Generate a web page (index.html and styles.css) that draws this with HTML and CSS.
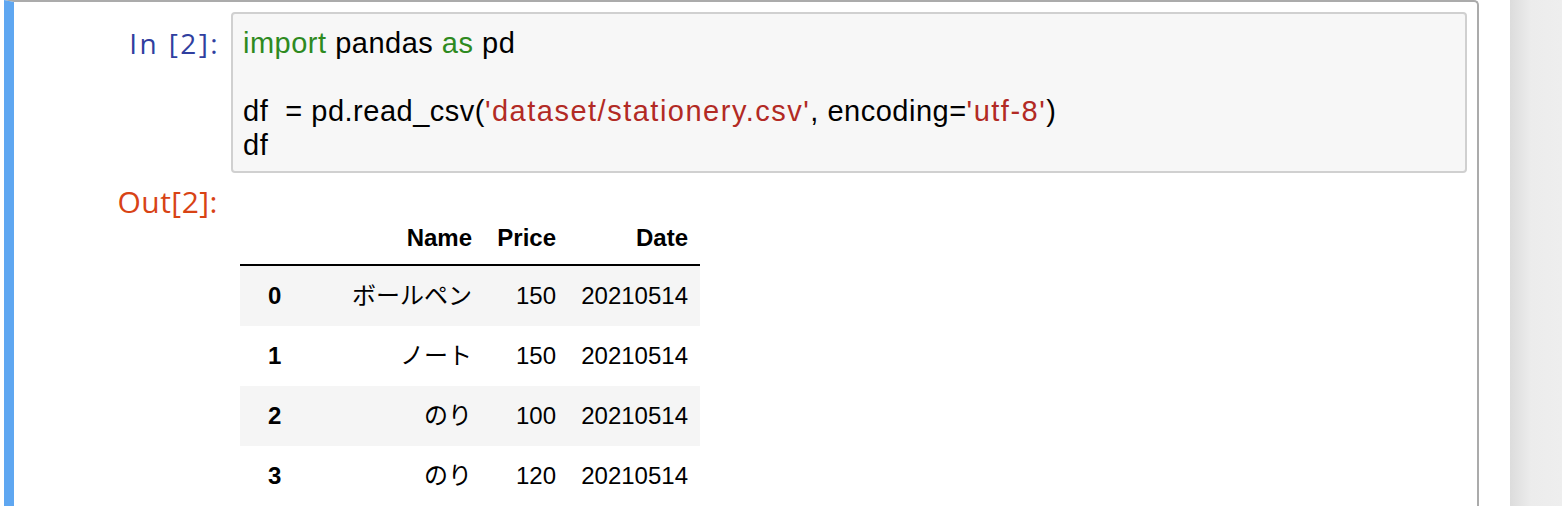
FILE: index.html
```html
<!DOCTYPE html>
<html lang="ja">
<head>
<meta charset="utf-8">
<title>Notebook</title>
<link rel="stylesheet" href="styles.css">
</head>
<body>
<div class="page">
  <div class="main">
    <div class="cell">
      <div class="row">
        <div class="prompt in-prompt">In&nbsp;[2]:</div>
        <div class="code"><div class="line"><span class="kw">import</span> pandas <span class="kw">as</span> pd</div><div class="line">&nbsp;</div><div class="line">df&nbsp; = pd.read_csv(<span class="str">'dataset/stationery.csv'</span>, encoding=<span class="str">'utf-8'</span>)</div><div class="line">df</div></div>
      </div>
      <div class="row out-row">
        <div class="prompt out-prompt">Out[2]:</div>
        <div class="output">
          <table class="df">
            <thead>
              <tr><th class="c-idx"></th><th class="c-name">Name</th><th class="c-price">Price</th><th class="c-date">Date</th></tr>
            </thead>
            <tbody>
              <tr class="odd"><th class="c-idx">0</th><td>ボールペン</td><td>150</td><td>20210514</td></tr>
              <tr><th class="c-idx">1</th><td>ノート</td><td>150</td><td>20210514</td></tr>
              <tr class="odd"><th class="c-idx">2</th><td>のり</td><td>100</td><td>20210514</td></tr>
              <tr><th class="c-idx">3</th><td>のり</td><td>120</td><td>20210514</td></tr>
            </tbody>
          </table>
        </div>
      </div>
    </div>
  </div>
  <div class="side"></div>
</div>
</body>
</html>
```
FILE: styles.css
```css
html, body { margin: 0; padding: 0; background: #fff; }
body { width: 1562px; height: 506px; overflow: hidden; font-family: "Liberation Sans", "Noto Sans CJK JP", sans-serif; }
.page { display: flex; height: 506px; }
.main { width: 1510px; flex: none; padding-left: 4px; box-sizing: border-box; }
.side { flex: 1; background: linear-gradient(to right, #dcdcdc, #ececec 40%, #eeeeee); }
.cell {
  width: 1475px;
  box-sizing: border-box;
  border-top: 2px solid #ababab;
  border-right: 2px solid #ababab;
  border-left: 10px solid #5fa7f1;
  border-top-right-radius: 5px;
  padding: 10px 10px 0 0;
  height: 520px;
}
.row { display: flex; align-items: flex-start; }
.prompt {
  width: 217px; flex: none; box-sizing: border-box;
  padding-right: 13px; text-align: right;
  font-family: "Open Sans", "Liberation Sans", sans-serif;
  line-height: 34px;
}
.in-prompt { color: #303f9f; font-size: 28px; padding-top: 14px; letter-spacing: 2.4px; padding-right: 11px; }
.out-prompt { color: #d84315; font-size: 30px; letter-spacing: 0.5px; }
.code {
  flex: 1;
  background: #f7f7f7;
  border: 2px solid #d0d0d0;
  border-radius: 4px;
  padding: 12px 10px 9px;
  font-size: 29px;
  letter-spacing: 0.5px;
  line-height: 34px;
  color: #000;
  white-space: pre;
}
.kw { color: #2e8a1f; }
.str { color: #b22a24; letter-spacing: 1.5px; }
.out-row { padding-top: 12px; }
.output { flex: 1; padding-left: 9px; }
.df {
  border-collapse: collapse;
  border-spacing: 0;
  margin-top: 19px;
  font-size: 24px;
  color: #000;
  table-layout: fixed;
  width: 460px;
}
.df th, .df td {
  box-sizing: border-box;
  padding: 12px;
  line-height: 36px;
  text-align: right;
  vertical-align: middle;
  white-space: nowrap;
  font-weight: normal;
}
.df thead th { font-weight: bold; padding-top: 16px; padding-bottom: 8px; border-bottom: 2px solid #000; }
.df th.c-idx { font-weight: bold; text-align: left; padding-left: 28px; }
.c-idx { width: 100px; }
.c-name { width: 144px; }
.c-price { width: 84px; }
.c-date { width: 132px; }
.df tr.odd { background: #f5f5f5; }
```
